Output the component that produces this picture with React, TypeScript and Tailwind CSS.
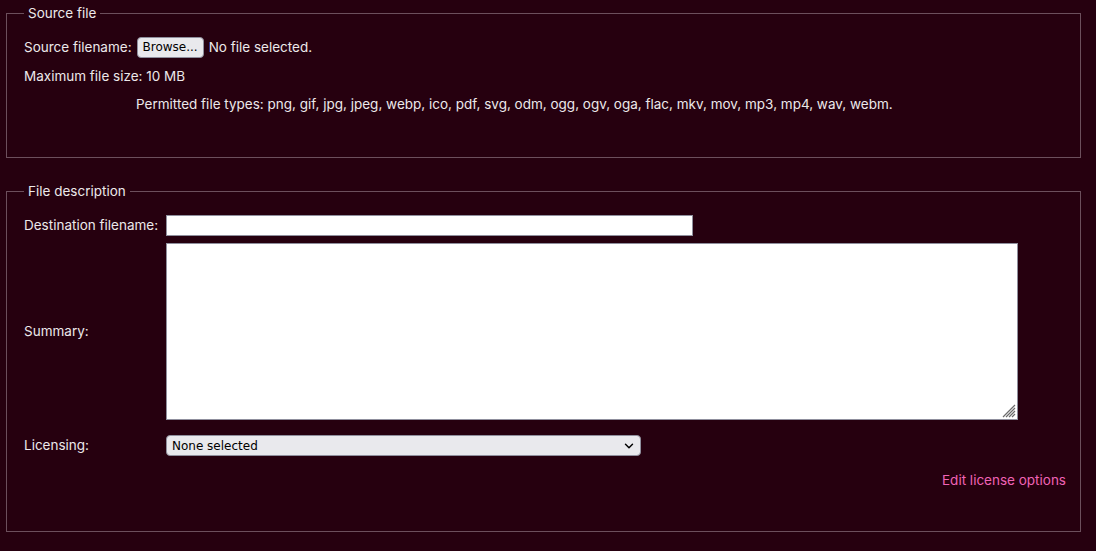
import { ChevronDown } from 'lucide-react';

const labelFont = "font-['Inter','Noto_Sans',sans-serif]";
const controlFont = "font-['DejaVu_Sans','Liberation_Sans',sans-serif]";

function SourceFile() {
  return (
    <fieldset className="ml-[6px] mr-[15px] border border-[#6c4f5c] px-[17px] pb-[43px]">
      <legend className="px-1 leading-[20px]">Source file</legend>
      <div className="mt-[14px] flex h-[20px] items-center gap-[5px]">
        <span>Source filename:</span>
        <button
          className={`h-[21px] rounded-[4px] border border-[#8f8f9d] bg-[#e9e9ed] px-[5px] text-[12px] leading-none text-black ${controlFont}`}
        >
          Browse...
        </button>
        <span>No file selected.</span>
      </div>
      <div className="mt-[9px] leading-[20px]">Maximum file size: 10 MB</div>
      <div className="mt-[8px] pl-[112px] leading-[20px]">
        Permitted file types: png, gif, jpg, jpeg, webp, ico, pdf, svg, odm, ogg, ogv, oga, flac, mkv, mov, mp3, mp4, wav, webm.
      </div>
    </fieldset>
  );
}

function FileDescription() {
  return (
    <fieldset className="ml-[6px] mr-[15px] mt-[23px] border border-[#6c4f5c] px-[17px] pb-[41px]">
      <legend className="px-1 leading-[20px]">File description</legend>

      {/* 대상 파일명 / Destination filename */}
      <div className="mt-[14px] flex items-center">
        <label className="w-[142px] shrink-0">Destination filename:</label>
        <input
          type="text"
          className="h-[21px] w-[527px] border border-[#8f8f9d] bg-white"
        />
      </div>

      {/* 요약 / Summary */}
      <div className="mt-[7px] flex items-center">
        <label className="w-[142px] shrink-0">Summary:</label>
        <div className="relative h-[177px] w-[852px] border border-[#8f8f9d] bg-white">
          <svg
            className="absolute bottom-[1px] right-[1px]"
            width="15"
            height="15"
            viewBox="0 0 15 15"
          >
            <path
              d="M14 2 L2 14 M14 5 L5 14 M14 8 L8 14 M14 11 L11 14"
              stroke="#6b6b6b"
              strokeWidth="1.2"
            />
          </svg>
        </div>
      </div>

      {/* 라이선스 / Licensing */}
      <div className="mt-[15px] flex items-center">
        <label className="w-[142px] shrink-0">Licensing:</label>
        <div
          className={`flex h-[21px] w-[475px] items-center justify-between rounded-[4px] border border-[#8f8f9d] bg-[#e9e9ed] pl-[5px] pr-[4px] text-[12px] text-black ${controlFont}`}
        >
          <span>None selected</span>
          <ChevronDown className="h-[14px] w-[14px]" strokeWidth={2.5} />
        </div>
      </div>

      <div className="mt-[14px] flex justify-end">
        <a className="mr-[-3px] leading-[20px] text-[#f063b6]">Edit license options</a>
      </div>
    </fieldset>
  );
}

export default function App() {
  return (
    <div className={`min-h-[551px] bg-[#26000f] pt-[3px] text-[13.5px] text-[#ece8ea] ${labelFont}`}>
      <SourceFile />
      <FileDescription />
    </div>
  );
}
